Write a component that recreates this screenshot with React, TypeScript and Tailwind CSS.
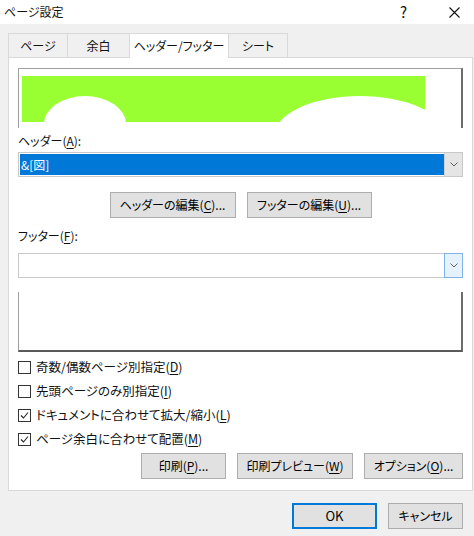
import React from "react";

const font = { fontFamily: '"Noto Sans CJK JP", "Noto Sans", sans-serif' };

function U({ c }: { c: string }) {
  return <span className="underline underline-offset-2">{c}</span>;
}

function Chevron() {
  return (
    <svg width="8" height="5" viewBox="0 0 8 5">
      <path d="M0.5 0.5 L4 4 L7.5 0.5" fill="none" stroke="#606060" strokeWidth="1" />
    </svg>
  );
}

function Check({ checked }: { checked: boolean }) {
  return (
    <div className="w-[13px] h-[13px] border border-[#333] bg-white flex items-center justify-center shrink-0">
      {checked && (
        <svg width="11" height="11" viewBox="0 0 11 11">
          <path d="M2 5.5 L4.5 8 L9 2.5" fill="none" stroke="#222" strokeWidth="1.1" />
        </svg>
      )}
    </div>
  );
}

function Btn({ w, children, def }: { w: string; children: React.ReactNode; def?: boolean }) {
  return (
    <div
      className={`${w} h-[26px] flex items-center justify-center whitespace-nowrap bg-[#e1e1e1] text-[12px] text-black ${
        def ? "border-2 border-[#0078d7]" : "border border-[#adadad]"
      }`}
    >
      {children}
    </div>
  );
}

export default function App() {
  const tabs = [
    { t: "ページ", w: "w-[60px]" },
    { t: "余白", w: "w-[62px]" },
    { t: "ヘッダー/フッター", w: "w-[99px]", active: true },
    { t: "シート", w: "w-[59px]" },
  ];
  const checks = [
    { t: "奇数/偶数ページ別指定(", k: "D", e: ")", c: false },
    { t: "先頭ページのみ別指定(", k: "I", e: ")", c: false },
    { t: "ドキュメントに合わせて拡大/縮小(", k: "L", e: ")", c: true },
    { t: "ページ余白に合わせて配置(", k: "M", e: ")", c: true },
  ];
  return (
    <div
      className="w-[474px] h-[536px] bg-[#f0f0f0] overflow-hidden text-[#111] [font-feature-settings:'palt']"
      style={font}
    >
      {/* title bar */}
      <div className="h-[24px] bg-white flex items-center relative">
        <span className="pl-[4px] text-[12px]">ページ設定</span>
        <span className="absolute left-[400px] top-[2px] text-[15px] leading-[20px]">?</span>
        <svg className="absolute left-[449px] top-[7px]" width="11" height="11" viewBox="0 0 11 11">
          <path d="M0.5 0.5 L10.5 10.5 M10.5 0.5 L0.5 10.5" stroke="#111" strokeWidth="1.1" />
        </svg>
      </div>
      <div className="pl-[8px] pt-[9px]">
        {/* tabs */}
        <div className="flex h-[24px] relative z-10">
          {tabs.map((tb) => (
            <div
              key={tb.t}
              className={`${tb.w} flex items-center justify-center whitespace-nowrap text-[12px] border-t border-r border-[#d9d9d9] first:border-l ${
                tb.active ? "bg-white h-[25px]" : "bg-[#f0f0f0] h-[24px]"
              }`}
            >
              {tb.t}
            </div>
          ))}
        </div>
        {/* panel */}
        <div className="w-[465px] h-[434px] bg-white border border-[#d9d9d9] px-[9px] flex flex-col">
          {/* header preview */}
          <div className="mt-[10px] h-[60px] border-t border-t-[#a0a0a0] border-l border-l-[#a0a0a0] border-r-2 border-r-[#6d6d6d] pt-[7px] pl-[3px]">
            <svg width="403" height="46" viewBox="0 0 403 46">
              <rect x="0" y="0" width="403" height="46" fill="#99ff33" />
              <ellipse cx="63" cy="48" rx="41" ry="28" fill="#ffffff" />
              <ellipse cx="338" cy="59" rx="85" ry="39" fill="#ffffff" />
            </svg>
          </div>
          <div className="h-[24px] flex items-center pt-[2px] text-[12px]">
            ヘッダー(<U c="A" />):
          </div>
          <div className="h-[25px] border border-[#c8c8c8] flex items-stretch">
            <div className="flex-1 m-[1px] mr-0 bg-[#0078d7] text-white text-[12px] flex items-center pl-[1px]">
              &amp;[図]
            </div>
            <div className="w-[18px] bg-[#e5e5e5] border-l border-[#d0d0d0] flex items-center justify-center">
              <Chevron />
            </div>
          </div>
          <div className="mt-[15px] flex justify-center gap-[11px]">
            <Btn w="w-[126px]">
              ヘッダーの編集(<U c="C" />)...
            </Btn>
            <Btn w="w-[125px]">
              フッターの編集(<U c="U" />)...
            </Btn>
          </div>
          <div className="h-[35px] flex items-center text-[12px]">
            フッター(<U c="F" />):
          </div>
          <div className="h-[25px] border border-[#c8c8c8] flex items-stretch">
            <div className="flex-1 bg-white" />
            <div className="w-[19px] -my-[1px] -mr-[1px] bg-[#e5f1fb] border border-[#7eb4ea] flex items-center justify-center">
              <Chevron />
            </div>
          </div>
          {/* footer preview */}
          <div className="mt-[14px] h-[60px] border-l border-l-[#a0a0a0] border-b-2 border-b-[#5a5a5a] border-r-2 border-r-[#6d6d6d]" />
          <div className="mt-[3px] flex flex-col">
            {checks.map((c) => (
              <div key={c.t} className="h-[24px] flex items-center gap-[5px] text-[12.5px]">
                <Check checked={c.c} />
                <span>
                  {c.t}
                  <U c={c.k} />
                  {c.e}
                </span>
              </div>
            ))}
          </div>
          <div className="mt-[2px] flex justify-end gap-[11px]">
            <Btn w="w-[85px]">
              印刷(<U c="P" />)...
            </Btn>
            <Btn w="w-[116px]">
              印刷プレビュー(<U c="W" />)
            </Btn>
            <Btn w="w-[99px]">
              オプション(<U c="O" />)...
            </Btn>
          </div>
        </div>
        <div className="mt-[12px] w-[455px] flex justify-end gap-[11px]">
          <Btn w="w-[85px]" def>
            <span className="text-[13px]">OK</span>
          </Btn>
          <Btn w="w-[75px]">キャンセル</Btn>
        </div>
      </div>
    </div>
  );
}
